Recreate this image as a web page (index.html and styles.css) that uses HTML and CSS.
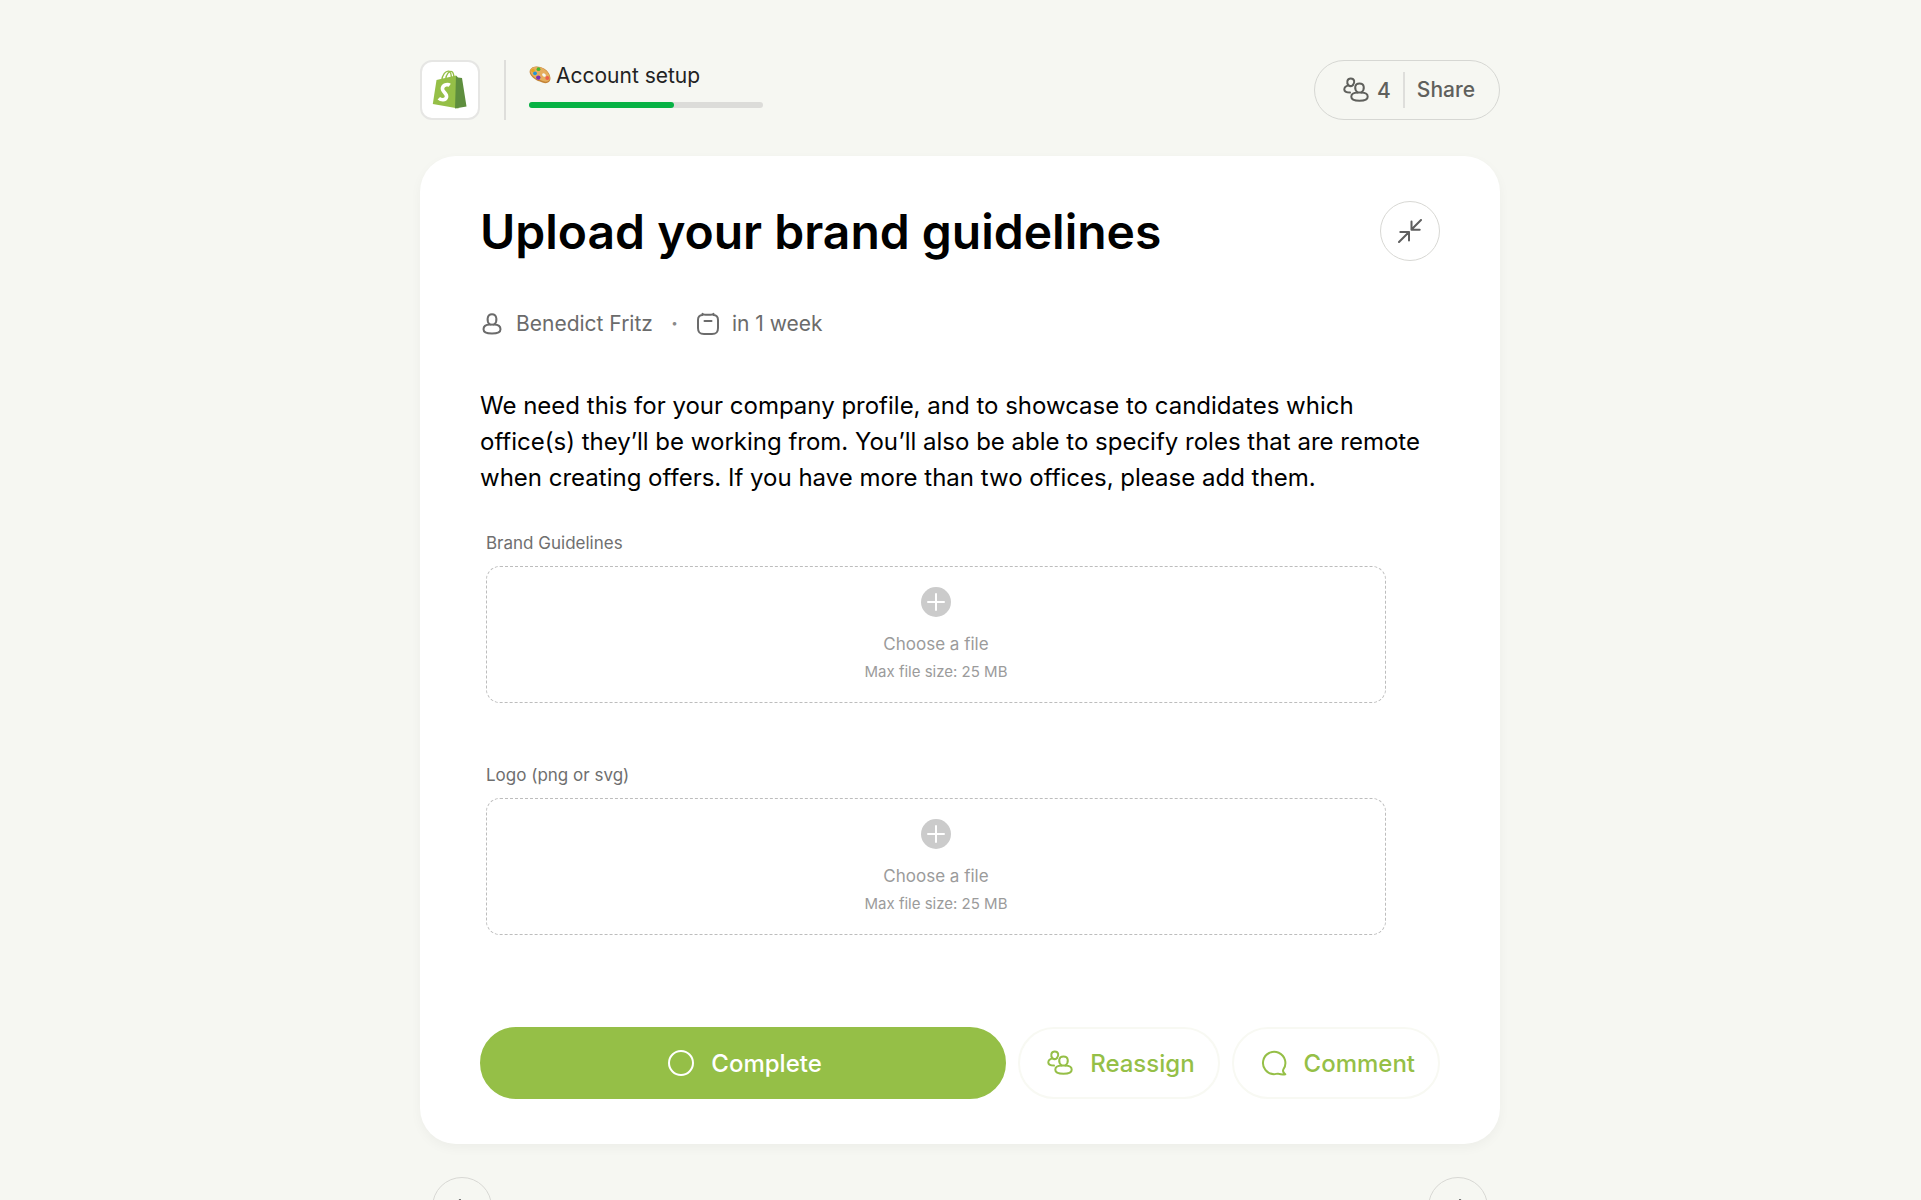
FILE: index.html
```html
<!DOCTYPE html>
<html lang="en">
<head>
<meta charset="utf-8">
<meta name="viewport" content="width=device-width, initial-scale=1">
<title>Account setup</title>
<link rel="stylesheet" href="styles.css">
</head>
<body>
<svg class="sprite" aria-hidden="true">
  <symbol id="people" viewBox="0 0 26 26">
    <g fill="none" stroke="currentColor" stroke-width="2" stroke-linecap="round" stroke-linejoin="round">
      <path d="M14.600 15.600C11 12.500 11.300 6.600 16.500 6.600S22 12.500 18.400 15.600C22 15.700 24.700 17.300 24.700 19.700C24.700 22.300 21.500 23.700 16.500 23.700S8.300 22.300 8.300 19.700C8.300 17.300 11 15.700 14.600 15.600Z"/>
      <path d="M14.600 15.600h3.800"/>
      <path d="M9.800 8.200C12.200 5.500 11.600 1.500 7.800 1.500S3.200 5.700 5.600 8.400C3 9 1.300 10.500 1.300 12.500C1.300 14.500 3.400 15.500 7 15.600"/>
      <path d="M5.600 8.400C6.800 9.300 8.600 9.200 9.800 8.200"/>
    </g>
  </symbol>
  <symbol id="plus" viewBox="0 0 30 30">
    <circle cx="15" cy="15" r="15" fill="#cbcbcb"/>
    <path d="M15 7v16M7 15h16" stroke="#fff" stroke-width="2" stroke-linecap="round"/>
  </symbol>
</svg>
<div class="page">
  <header class="header">
    <a class="logo" href="#" aria-label="Shopify">
      <svg width="36" height="40" viewBox="0 0 36 40" aria-hidden="true">
        <path d="M9.500 13C10 5 14 1.500 17 2.200C19 3 19.500 6 19.500 11M13.500 11C14 5 17.500 1.600 19.800 2.600C21.700 3.600 22 7 22 10" fill="none" stroke="#95bf47" stroke-width="1.400"/>
        <path d="M4.500 11L24 6.500L26.500 39.500L.8 35Z" fill="#95bf47"/>
        <path d="M24 6.500L26 8.500L30 9L34.500 37.500L23 39.500Z" fill="#5e8e3e"/>
        <path d="M17.800 16.200C16.500 15.300 11.500 15 10.500 19C9.600 22.800 15.600 24.400 14.500 28.200C13.500 31.500 9 31.300 6.800 29.200" fill="none" stroke="#fff" stroke-width="3.600"/>
      </svg>
    </a>
    <div class="setup">
      <div class="setup-title">
        <svg width="22" height="18" viewBox="0 0 22 18" aria-hidden="true">
          <path d="M1 4C3-.5 10-.5 15 2.500C20 5.500 22.500 11 21 14.500C19.500 17.700 15 17.700 12 16C10.500 15 9.500 15.500 8 14.500C3 11.500-.500 7.500 1 4Z" fill="#c48336"/>
          <path d="M1.500 3.500C3.500 0 10 0 15 3C19.500 6 21.500 10.500 20.500 13.500C19 16.500 15.500 16 12.500 14.500C11 13.700 10 14.300 8.500 13.500C3.500 10.500.5 6.500 1.500 3.500Z" fill="#e5ad5d"/>
          <circle cx="4" cy="4.500" r="1.800" fill="#e8a51d"/>
          <circle cx="9.500" cy="3.200" r="1.900" fill="#43b832"/>
          <circle cx="6" cy="7.300" r="1.900" fill="#2295d4"/>
          <circle cx="9.300" cy="11.600" r="2.200" fill="#7b2db8"/>
          <circle cx="18.300" cy="12" r="2" fill="#ed604d"/>
          <ellipse cx="15" cy="9" rx="2" ry="1.500" fill="#f6f7f2" transform="rotate(35 15 9)"/>
        </svg>
        <span id="setup-label">Account setup</span>
      </div>
      <div class="track" role="progressbar" aria-labelledby="setup-label" aria-valuenow="62"><div class="fill" style="width:62%"></div></div>
    </div>
    <button class="share" type="button">
      <svg width="26" height="26" aria-hidden="true"><use href="#people"/></svg>
      <span class="count">4</span>
      <span class="share-label">Share</span>
    </button>
  </header>

  <main class="card">
    <div class="heading">
      <h1>Upload your brand guidelines</h1>
      <button class="round" type="button" aria-label="Collapse">
        <svg width="24" height="24" viewBox="0 0 24 24" fill="none" stroke="currentColor" stroke-width="2" stroke-linecap="round" stroke-linejoin="round" aria-hidden="true"><path d="M23 1L13.500 10.500M13.500 2.500v8.200h8.200M1 23L11 13M2.300 13H11v8.500"/></svg>
      </button>
    </div>

    <div class="meta">
      <svg width="24" height="24" viewBox="0 0 24 24" fill="none" stroke="currentColor" stroke-width="2" stroke-linejoin="round" aria-hidden="true"><path d="M9.900 12.600C6.300 9.500 6.800 2.300 12 2.300S17.700 9.500 14.100 12.600C18 12.800 20.500 14.800 20.500 17.300C20.500 20 17.500 21.500 12 21.500S3.500 20 3.500 17.300C3.500 14.800 6 12.800 9.900 12.600Z"/><path d="M9.900 12.600h4.200"/></svg>
      <span>Benedict Fritz</span>
      <span class="dot">·</span>
      <svg width="24" height="24" viewBox="0 0 24 24" fill="none" stroke="currentColor" stroke-width="2" stroke-linecap="round" aria-hidden="true"><path d="M6.500 1.800C7.500 3.200 16.500 3.200 17.500 1.800M6.500 3C3 3.200 2 5 2 8v8c0 4.500 1.500 6 6 6h8c4.500 0 6-1.500 6-6V8c0-3-1-4.800-4.500-5M8.500 9h7"/></svg>
      <span>in 1 week</span>
    </div>

    <p class="description">We need this for your company profile, and to showcase to candidates which office(s) they’ll be working from. You’ll also be able to specify roles that are remote when creating offers. If you have more than two offices, please add them.</p>

    <form class="form">
      <div class="field">
        <span class="field-label" id="guidelines-label">Brand Guidelines</span>
        <button class="drop" type="button" aria-describedby="guidelines-label">
          <svg width="30" height="30" aria-hidden="true"><use href="#plus"/></svg>
          <span class="choose">Choose a file</span>
          <span class="limit">Max file size: 25 MB</span>
        </button>
      </div>
      <div class="field">
        <span class="field-label" id="logo-label">Logo (png or svg)</span>
        <button class="drop" type="button" aria-describedby="logo-label">
          <svg width="30" height="30" aria-hidden="true"><use href="#plus"/></svg>
          <span class="choose">Choose a file</span>
          <span class="limit">Max file size: 25 MB</span>
        </button>
      </div>
    </form>

    <div class="actions">
      <button class="action complete" type="button">
        <svg width="26" height="26" viewBox="0 0 26 26" fill="none" stroke="currentColor" stroke-width="2" aria-hidden="true"><circle cx="13" cy="13" r="12"/></svg>
        Complete
      </button>
      <button class="action" type="button">
        <svg width="26" height="26" aria-hidden="true"><use href="#people"/></svg>
        Reassign
      </button>
      <button class="action" type="button">
        <svg width="26" height="26" viewBox="0 0 26 26" fill="none" stroke="currentColor" stroke-width="2" stroke-linecap="round" stroke-linejoin="round" aria-hidden="true"><path d="M22.300 19.500A11.200 11.200 0 1 0 13 24.200C15 24.200 16 23.200 17.500 23.800C19.500 24.500 22 24.800 24.300 24.300C22.800 23.300 21.500 21.500 22.300 19.500Z"/></svg>
        Comment
      </button>
    </div>
  </main>

  <nav class="pager" aria-label="Tasks">
    <a class="round" href="#" aria-label="Previous"><svg width="20" height="16" viewBox="0 0 20 16" fill="none" stroke="currentColor" stroke-width="2" stroke-linecap="round" stroke-linejoin="round" aria-hidden="true"><path d="M19 8H1M8 1L1 8l7 7"/></svg></a>
    <a class="round" href="#" aria-label="Next"><svg width="20" height="16" viewBox="0 0 20 16" fill="none" stroke="currentColor" stroke-width="2" stroke-linecap="round" stroke-linejoin="round" aria-hidden="true"><path d="M1 8h18M12 1l7 7-7 7"/></svg></a>
  </nav>
</div>
</body>
</html>
```
FILE: styles.css
```css
* { box-sizing: border-box; }

body {
  margin: 0;
  height: 100vh;
  overflow-y: auto;
  scrollbar-width: none;
  background: #f6f7f2;
  color: #000;
  font-family: Inter, "Liberation Sans", sans-serif;
}

button { font: inherit; cursor: pointer; }
h1, p { margin: 0; }
svg { display: block; flex: none; }
.sprite { position: absolute; width: 0; height: 0; }

.page {
  max-width: 1129px;
  margin: 0 auto;
  padding: 60px 25px 60px 24px;
}

.header {
  display: flex;
  height: 60px;
  margin-bottom: 36px;
}

.logo {
  display: flex;
  align-items: center;
  justify-content: center;
  width: 60px;
  padding-bottom: 3px;
  background: #fff;
  border: 2px solid #e6e6e4;
  border-radius: 12px;
}

.setup {
  margin-left: 24px;
  padding: 1px 0 0 23px;
  border-left: 2px solid #dededb;
}

.setup-title {
  display: flex;
  align-items: center;
  gap: 5px;
  height: 28px;
  color: #222;
  font-size: 21px;
}

.track {
  width: 234px;
  height: 6px;
  margin-top: 13px;
  border-radius: 3px;
  background: #dcdcd9;
}

.fill {
  height: 6px;
  border-radius: 3px;
  background: #07b244;
}

.share {
  display: flex;
  align-items: center;
  margin-left: auto;
  padding: 0 24px 0 28px;
  background: transparent;
  border: 1px solid #d6d7d3;
  border-radius: 30px;
  color: #5f605c;
  font-size: 21px;
  font-weight: 500;
}

.count { padding: 0 12px 0 8px; }

.share-label {
  padding-left: 12px;
  border-left: 2px solid #dededb;
  line-height: 36px;
}

.card {
  padding: 45px 60px;
  background: #fff;
  border-radius: 36px;
  box-shadow: 0 4px 12px rgba(0, 0, 0, 0.04);
}

.heading {
  display: flex;
  align-items: center;
  justify-content: space-between;
}

h1 {
  padding-top: 2px;
  font-size: 48px;
  font-weight: 600;
  line-height: 58px;
}

.round {
  display: flex;
  align-items: center;
  justify-content: center;
  width: 60px;
  height: 60px;
  padding: 0;
  background: transparent;
  border: 1px solid #d8d8d4;
  border-radius: 50%;
  color: #5f5f5f;
}

.meta {
  display: flex;
  align-items: center;
  gap: 12px;
  margin-top: 48px;
  color: #6b6b6b;
  font-size: 21px;
  line-height: 30px;
}

.dot {
  padding: 0 6px;
  color: #8a8a8a;
  font-weight: 700;
}

.description {
  margin-top: 49px;
  font-size: 24px;
  line-height: 36px;
}

.form {
  display: grid;
  gap: 60px;
  margin-top: 35px;
  padding: 0 54px 0 6px;
}

.field-label {
  display: block;
  color: #6f6f6f;
  font-size: 17px;
  line-height: 24px;
}

.drop {
  display: flex;
  flex-direction: column;
  align-items: center;
  width: 100%;
  margin-top: 11px;
  padding: 20px 0 17px;
  background: transparent;
  border: 1px dashed #bdbdbd;
  border-radius: 14px;
  color: #9b9b9b;
}

.choose {
  margin-top: 14px;
  font-size: 17px;
  line-height: 27px;
}

.limit {
  font-size: 15px;
  line-height: 27px;
}

.actions {
  display: flex;
  gap: 12px;
  margin-top: 92px;
}

.action {
  display: flex;
  align-items: center;
  justify-content: center;
  gap: 17px;
  height: 72px;
  padding: 0 23px 0 27px;
  background: transparent;
  border: 2px solid #f8f9f3;
  border-radius: 36px;
  color: #95bf47;
  font-size: 24px;
  font-weight: 500;
}

.complete {
  flex: 1;
  background: #95bf47;
  border-color: #95bf47;
  color: #fff;
}

.pager {
  display: flex;
  justify-content: space-between;
  padding: 33px 12px 0;
}
```
